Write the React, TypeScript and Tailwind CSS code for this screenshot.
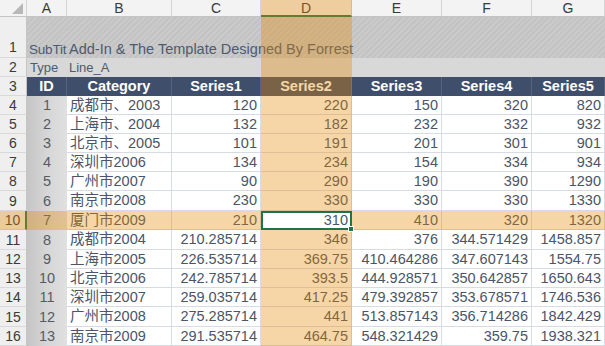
import React from 'react';

interface DataRow {
  id: number;
  category: string;
  series: string[];
}

const rows: DataRow[] = [
  { id: 1, category: '成都市、2003', series: ['120', '220', '150', '320', '820'] },
  { id: 2, category: '上海市、2004', series: ['132', '182', '232', '332', '932'] },
  { id: 3, category: '北京市、2005', series: ['101', '191', '201', '301', '901'] },
  { id: 4, category: '深圳市2006', series: ['134', '234', '154', '334', '934'] },
  { id: 5, category: '广州市2007', series: ['90', '290', '190', '390', '1290'] },
  { id: 6, category: '南京市2008', series: ['230', '330', '330', '330', '1330'] },
  { id: 7, category: '厦门市2009', series: ['210', '310', '410', '320', '1320'] },
  { id: 8, category: '成都市2004', series: ['210.285714', '346', '376', '344.571429', '1458.857'] },
  { id: 9, category: '上海市2005', series: ['226.535714', '369.75', '410.464286', '347.607143', '1554.75'] },
  { id: 10, category: '北京市2006', series: ['242.785714', '393.5', '444.928571', '350.642857', '1650.643'] },
  { id: 11, category: '深圳市2007', series: ['259.035714', '417.25', '479.392857', '353.678571', '1746.536'] },
  { id: 12, category: '广州市2008', series: ['275.285714', '441', '513.857143', '356.714286', '1842.429'] },
  { id: 13, category: '南京市2009', series: ['291.535714', '464.75', '548.321429', '359.75', '1938.321'] }
];

const columns = ['A', 'B', 'C', 'D', 'E', 'F', 'G'];
const headers = ['ID', 'Category', 'Series1', 'Series2', 'Series3', 'Series4', 'Series5'];

const rowHead = 'flex items-center justify-center bg-[#efefef] border-b border-r border-b-[#d9d9d9] border-r-[#c4c4c4] text-[14px] text-[#3a3a3a]';
const hatch = 'bg-[repeating-linear-gradient(135deg,#c3c3c3_0px,#c3c3c3_2px,#cacaca_2px,#cacaca_4px)]';
const dataCell = 'flex items-center justify-end pr-[3px] bg-white border-b border-r border-[#d7dce4] text-[#4a5568] whitespace-nowrap overflow-hidden';

const App: React.FC = () => {
  return (
    <div
      className="relative w-[605px] h-[346px] overflow-hidden bg-white"
      style={{ fontFamily: '"Liberation Sans", "Noto Sans CJK SC", Arial, sans-serif' }}
    >
      <div className="grid grid-cols-[27px_40px_105px_89px_91px_90px_90px_73px] grid-rows-[17px_41px_19px_19px_19px_19px_19px_19px_19px_20px_19px_20px_19px_19px_19px_20px_19px] text-[14.5px] leading-none">
        {/* Column letters */}
        <div className="relative bg-[#f3f3f3] border-b border-r border-b-[#c4c4c4] border-r-[#d4d4d4]">
          <svg className="absolute right-[3px] bottom-[2px]" width="11" height="11" viewBox="0 0 11 11">
            <polygon points="11,0 11,11 0,11" fill="#b8b8b8" />
          </svg>
        </div>
        {columns.map(col => (
          <div
            key={col}
            className={`flex items-center justify-center bg-[#f3f3f3] border-r border-r-[#d4d4d4] text-[14px] text-[#3a3a3a] ${
              col === 'D' ? 'border-b-2 border-b-[#217346]' : 'border-b border-b-[#c4c4c4]'
            }`}
          >
            {col}
          </div>
        ))}

        {/* Row 1 - title band */}
        <div className={`${rowHead} !items-end pb-[3px]`}>1</div>
        <div className={`${hatch} flex items-end pl-[2px] pb-[2px] whitespace-nowrap text-[13.5px] tracking-[-0.2px] text-[#4d5a70]`}>
          SubTit
        </div>
        <div className={`${hatch} col-span-6 flex items-end pl-[2px] pb-[2px] whitespace-nowrap text-[#4d5a70]`}>
          Add-In &amp; The Template Designed By Forrest
        </div>

        {/* Row 2 */}
        <div className={rowHead}>2</div>
        <div className="flex items-center pl-[3px] bg-[#d8d8d8] text-[13px] text-[#4d5a70] overflow-hidden whitespace-nowrap">
          Type
        </div>
        <div className="col-span-6 flex items-center pl-[2px] bg-[#d8d8d8] text-[13px] text-[#4d5a70] whitespace-nowrap">
          Line_A
        </div>

        {/* Row 3 - table header */}
        <div className={rowHead}>3</div>
        {headers.map(h => (
          <div
            key={h}
            className="flex items-center justify-center bg-[#3f4e6a] border-r border-r-[#56647d] font-bold text-white"
          >
            {h}
          </div>
        ))}

        {/* Data rows */}
        {rows.map((r, i) => {
          const rowNum = i + 4;
          const isCurrent = rowNum === 10;
          return (
            <React.Fragment key={r.id}>
              <div className={`${rowHead} ${isCurrent ? 'border-r-2 !border-r-[#217346]' : ''}`}>{rowNum}</div>
              <div className="flex items-center justify-center bg-gradient-to-r from-[#c5c5c5] via-[#d6d6d6] to-[#e0e0e0] text-[#555b66]">
                {r.id}
              </div>
              <div className="flex items-center pl-[3px] bg-white border-b border-r border-[#d7dce4] text-[#4a5568] whitespace-nowrap overflow-hidden">
                {r.category}
              </div>
              {r.series.map((v, j) =>
                isCurrent && j === 1 ? (
                  <div
                    key={j}
                    className="relative z-10 flex items-center justify-end pr-[2px] bg-white border-2 border-[#217346] text-[#4a5568]"
                  >
                    {v}
                    <span className="absolute -right-[4px] -bottom-[4px] w-[6px] h-[6px] bg-[#217346] border border-white" />
                  </div>
                ) : (
                  <div key={j} className={dataCell}>
                    {v}
                  </div>
                )
              )}
            </React.Fragment>
          );
        })}
      </div>

      {/* Focus highlight overlays */}
      <div className="pointer-events-none absolute top-0 left-[261px] w-[91px] h-full bg-[#e68a00]/35" />
      <div className="pointer-events-none absolute top-[211px] left-0 w-full h-[19px] bg-[#e68a00]/35" />
    </div>
  );
};

export default App;
